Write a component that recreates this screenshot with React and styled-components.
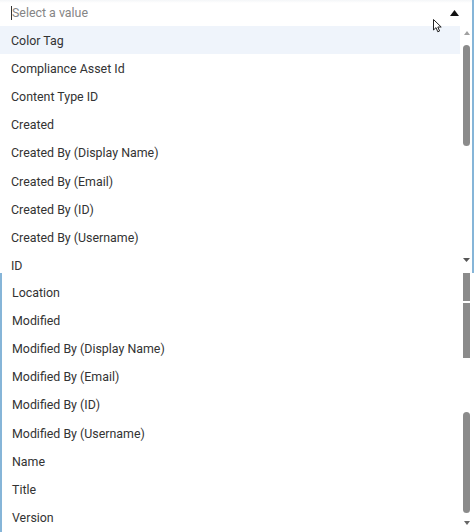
import React from "react";
import styled, { createGlobalStyle } from "styled-components";

const Global = createGlobalStyle`
  html, body { margin: 0; padding: 0; background: #fff; }
  body { font-family: Roboto, "Open Sans", "Liberation Sans", sans-serif; }
`;

const Page = styled.div`
  width: 474px;
  height: 532px;
  display: flex;
  flex-direction: column;
  overflow: hidden;
  background: #fff;
`;

const TopPanel = styled.div`
  position: relative;
  height: 273px;
  flex: none;
  border-right: 2px solid #86b5d8;
  display: flex;
  flex-direction: column;
`;

const InputRow = styled.div`
  height: 26px;
  flex: none;
  display: flex;
  align-items: center;
  padding: 0 13px 0 11px;
  background: linear-gradient(#f4f6f8 0, #fff 3px);
`;

const Placeholder = styled.span`
  flex: 1;
  font-size: 12.4px;
  color: #858585;
  border-left: 1px solid #333;
  line-height: 14px;
`;

const ListArea = styled.div`
  flex: 1;
  display: grid;
  grid-template-columns: 1fr ${(p) => p.$bar}px;
  grid-template-rows: minmax(0, 1fr);
  min-height: 0;
  overflow: hidden;
`;

const List = styled.div`
  display: flex;
  flex-direction: column;
  overflow: hidden;
  padding-top: ${(p) => p.$top || 0}px;
`;

const Row = styled.div`
  height: 28.2px;
  flex: none;
  display: flex;
  align-items: center;
  padding-left: ${(p) => p.$indent}px;
  font-size: 12.4px;
  color: #333;
  background: ${(p) => (p.$active ? "#eff4fb" : "transparent")};
  white-space: nowrap;
`;

const ScrollCol = styled.div`
  display: flex;
  flex-direction: column;
  padding: ${(p) => p.$pad};
`;

const Thumb = styled.div`
  flex: none;
  width: 7px;
  height: ${(p) => p.$h}px;
  margin-top: ${(p) => p.$mt || 0}px;
  margin-left: ${(p) => p.$ml}px;
  background: ${(p) => p.$c || "#8b8b8b"};
  border-radius: ${(p) => (p.$round ? "4px" : "0")};
`;

const Spacer = styled.div`
  flex: 1;
`;

const Arrow = styled.svg`
  flex: none;
  display: block;
  margin-left: ${(p) => p.$ml}px;
`;

const Cursor = styled.svg`
  position: absolute;
  left: 433px;
  top: 19px;
`;

const BottomPanel = styled.div`
  flex: 1;
  border-left: 2px solid #86b5d8;
  display: grid;
  grid-template-columns: 1fr 13px;
  grid-template-rows: minmax(0, 1fr);
  min-height: 0;
  overflow: hidden;
`;

const topItems = [
  "Color Tag",
  "Compliance Asset Id",
  "Content Type ID",
  "Created",
  "Created By (Display Name)",
  "Created By (Email)",
  "Created By (ID)",
  "Created By (Username)",
  "ID",
];

const bottomItems = [
  "Location",
  "Modified",
  "Modified By (Display Name)",
  "Modified By (Email)",
  "Modified By (ID)",
  "Modified By (Username)",
  "Name",
  "Title",
  "Version",
];

export default function App() {
  return (
    <>
      <Global />
      <Page>
        <TopPanel>
          <InputRow>
            <Placeholder>Select a value</Placeholder>
            <svg width="9" height="6" viewBox="0 0 9 6">
              <polygon points="0,6 4.5,0 9,6" fill="#111" />
            </svg>
          </InputRow>
          <ListArea $bar={12}>
            <List>
              {topItems.map((t, i) => (
                <Row key={t + i} $indent={11} $active={i === 0}>
                  {t}
                </Row>
              ))}
            </List>
            <ScrollCol $pad="5px 0 11px 0">
              <Arrow $ml={4} width="6" height="4" viewBox="0 0 6 4">
                <polygon points="0,4 3,0 6,4" fill="#a0a0a0" />
              </Arrow>
              <Thumb $ml={3} $mt={10} $h={101} $round />
              <Spacer />
              <Arrow $ml={3} width="7" height="4" viewBox="0 0 7 4">
                <polygon points="0,0 7,0 3.5,4" fill="#555" />
              </Arrow>
            </ScrollCol>
          </ListArea>
          <Cursor width="10" height="14" viewBox="0 0 10 14">
            <path
              d="M0.5 0.5 L0.5 11 L3 8.6 L4.8 12.8 L6.6 12 L4.8 8 L8.2 8 Z"
              fill="#fff"
              stroke="#222"
              strokeWidth="1"
              strokeLinejoin="round"
            />
          </Cursor>
        </TopPanel>
        <BottomPanel>
          <List $top={5}>
            {bottomItems.map((t) => (
              <Row key={t} $indent={10}>
                {t}
              </Row>
            ))}
          </List>
          <ScrollCol $pad="0 0 7px 0">
            <Thumb $ml={2} $h={28} />
            <Thumb $ml={2} $mt={2} $h={55} />
            <Thumb $ml={2} $mt={54} $h={101} $round />
            <Spacer />
            <Arrow $ml={3} width="6" height="4" viewBox="0 0 6 4">
              <polygon points="0,0 6,0 3,4" fill="#666" />
            </Arrow>
          </ScrollCol>
        </BottomPanel>
      </Page>
    </>
  );
}
